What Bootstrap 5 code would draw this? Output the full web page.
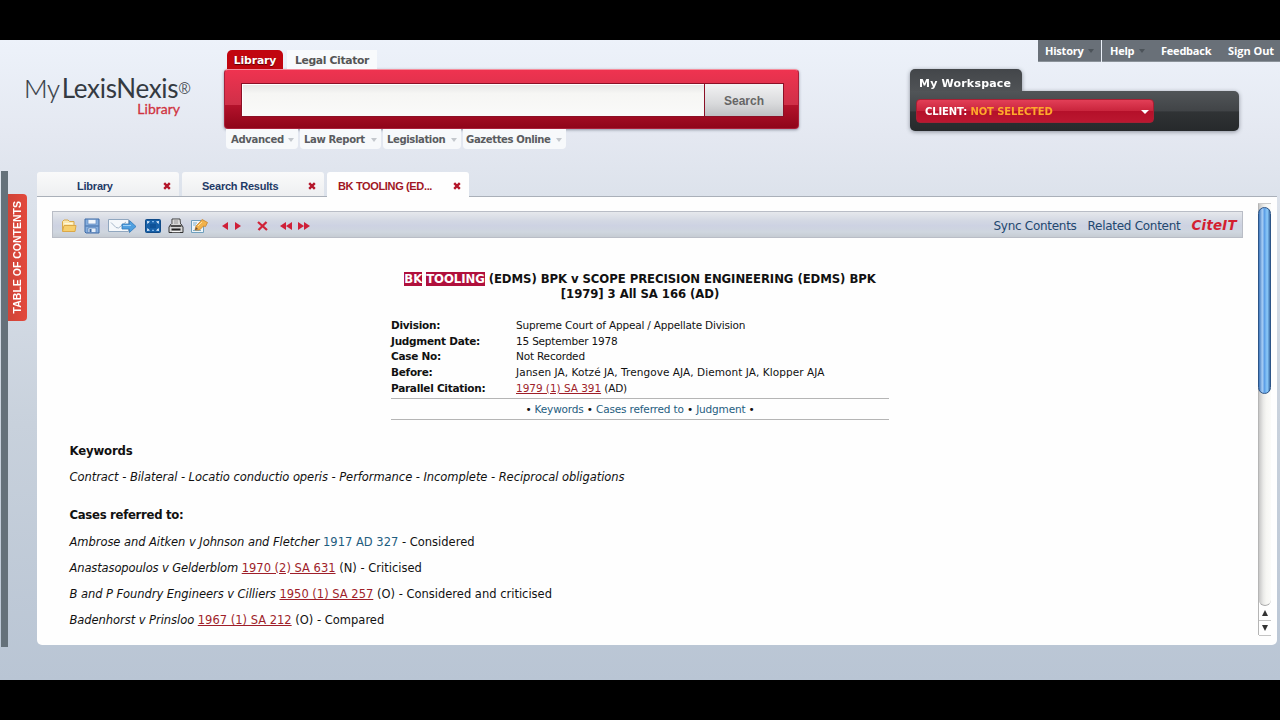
<!DOCTYPE html>
<html lang="en">
<head>
<meta charset="utf-8">
<meta name="viewport" content="width=device-width, initial-scale=1">
<title>MyLexisNexis Library</title>
<link rel="stylesheet" href="https://cdn.jsdelivr.net/npm/bootstrap@5.3.0/dist/css/bootstrap.min.css">
<style>
body{font-family:"DejaVu Sans","Liberation Sans",sans-serif;font-size:11px;line-height:16px;color:#111;background:#000;width:1280px;height:720px;overflow:hidden;padding:40px 0}
a{text-decoration:none;color:inherit}
.app{height:640px;background:linear-gradient(#edf2fa,#e4e8f1 15%,#dce2eb 25%,#c8d1dc 60%,#b9c5d4)}
.app-head{height:131px}
/* brand */
.brand{width:224px;padding:34px 0 0 24px;font-family:Lato,sans-serif;color:#343a42}
.brand-name{font-size:26px;line-height:28px;letter-spacing:-.3px;white-space:nowrap}
.brand-name .thin{font-weight:300;margin-right:2px;-webkit-text-stroke:.2px}
.brand-name .reg{font-size:15px;line-height:1;font-weight:300;vertical-align:4px;-webkit-text-stroke:.2px}
.brand-sub{width:156px;text-align:right;color:#d0333f;font-size:14px;line-height:14px;-webkit-text-stroke:.3px}
/* search */
.finder{width:575px;padding-top:10px}
.finder-tabs{height:19px;padding-left:3px;font-weight:700;font-size:10.8px;letter-spacing:-.12px;gap:4px}
.finder-tabs a{height:19px;line-height:22px;white-space:nowrap;text-align:center}
.finder-tabs .on{background:#c1050f;color:#fff;width:56px;border-radius:5px 5px 0 0;text-shadow:0 1px 1px #500}
.finder-tabs .off{background:#f8fafc;color:#555;width:90px;letter-spacing:-.35px}
.finder-box{height:60px;padding:13px 14px 13px 16px;border-radius:4px;border:1px solid #a9203a;border-top-color:#f48d9c;background:linear-gradient(#ef3350,#cf3048 60%,#b3122b 61%,#8f0519);box-shadow:0 1px 3px #8b90a0}
.finder-box .query{height:34px;min-width:0;border:1px solid #8b1026;border-right:0;border-radius:0;background:linear-gradient(#e6e6e5,#f6f6f4 30%,#fafaf9);box-shadow:inset 1px 1px 0 #fff;padding:0}
.finder-box .go{flex:0 0 80px;height:34px;border:1px solid #8b1026;border-radius:0;background:linear-gradient(#f2f2f3,#d9dadc 60%,#bfc0c3);font:700 12px "Liberation Sans",sans-serif;color:#666;padding:2px 0 0}
.finder-menu{padding-left:2px;gap:2px;letter-spacing:-.4px}
.finder-menu a{flex:0 0 auto;height:20px;line-height:18px;background:#f7f9fb;border-radius:0 0 4px 4px;font-weight:700;font-size:10.1px;color:#5a5c60;padding:2px 4px 0;white-space:nowrap;display:flex;justify-content:space-between;align-items:center}
.w-a{width:72px;letter-spacing:-.35px}.w-b{width:81px}.w-c{width:78px}.w-d{width:103px}
.finder-menu .w-a{padding-left:5px}.finder-menu .w-d{padding-left:3px}
.caret{display:inline-block;border:3px solid transparent;border-top:4px solid #c3c7cc;border-bottom:0}
/* account links and workspace */
.side{width:370px}
.util{height:22px;font:700 11px/20px "Open Sans",sans-serif;letter-spacing:-.22px;color:#fff}
.util a{background:#697078;padding:1px 7px 0;height:22px;white-space:nowrap;display:flex;justify-content:space-between;align-items:center;border-bottom:1px solid #8b9299}
.util .h{width:63px;margin-right:1px}.util .q{width:50px;padding-left:8px}.util .f{width:67px;padding-left:9px}.util .s{width:61px;padding-left:9px;padding-right:0;justify-content:flex-start;letter-spacing:-.05px}
.util .caret{border-top-color:#4c5359}
.desk{width:329px;margin-top:7px;filter:drop-shadow(0 1px 2px #8a8f9a)}
.desk-tab{width:112px;height:23px;background:linear-gradient(#43464a,#505356);border-radius:5px 5px 0 0;color:#fff;font-weight:700;line-height:29px;padding-left:9px;letter-spacing:.2px;white-space:nowrap}
.desk-body{height:40px;margin-top:-1px;border-radius:0 5px 5px 5px;background:linear-gradient(#515558,#414447 50%,#303335 52%,#26292b);padding:8px 6px}
.client{width:238px;height:24px;border-radius:4px;background:linear-gradient(#e23f57,#c9243c 50%,#b5102a 52%,#bb1730);border:1px solid #a81f33;color:#fff;font-weight:700;padding:1px 4px 0 8px;font-size:10px;letter-spacing:-.12px}
.client em{font-style:normal;color:#ffa92b}
.client .caret{border-width:4px;border-top:4px solid #fff;border-bottom:0}
/* work area */
.work{height:476px}
.rail{width:7px;margin-left:1px;background:#65717a}
.toc{width:19px;height:127px;margin-top:23px;border-radius:0 4px 4px 0;background:linear-gradient(90deg,#cf4438,#e3493c);color:#fff;font:700 10.5px/19px "Liberation Sans",sans-serif}
.toc span{writing-mode:vertical-rl;transform:rotate(180deg);white-space:nowrap}
.desk-main{width:1240px;margin-left:10px}
.doc-tabs{height:26px;padding-top:1px;gap:3px;font:700 11px/26px "Liberation Sans",sans-serif;letter-spacing:-.22px;color:#1e3a66;border-bottom:1px solid #aab0b9}
.doc-tabs>div{width:142px;height:24px;background:linear-gradient(#fafafa,#eeeff1);border-radius:3px 3px 0 0;display:flex;align-items:center;padding:3px 8px 0 40px;white-space:nowrap}
.doc-tabs>.mid{padding-left:20px}
.doc-tabs>.on{height:25px;background:#fefefe;color:#a01724;padding:3px 8px 1px 11px;letter-spacing:-.35px}
.doc-tabs svg{margin-left:auto}
.panel{height:448px;background:#fefefe;border-radius:0 0 5px 5px}
.page-col{width:1221px;padding:14px 0 0 15px}
.tools{width:1191px;height:27px;border:1px solid #b9bdc6;background:linear-gradient(#e6e8ec,#d3d8e3 35%,#cdd2e2 55%,#cfd6df 80%,#c6ccd3);padding:2px 5px 0 8px}
.tools svg{display:block;flex:none}
.tools a{font-size:12px;line-height:18px;padding-top:1px;color:#23476f;white-space:nowrap;letter-spacing:-.28px;margin-left:11px}
.tools .cite{color:#d31f30;font-weight:700;font-style:italic;font-size:13.4px;letter-spacing:.25px}
.g6{margin-left:6px}.g7{margin-left:7px}.g8{margin-left:8px}.g12{margin-left:12px}.g14{margin-left:14px}.g16{margin-left:16px}
/* document */
.case-head{width:498px;margin:34px 0 0 339px}
.case-title{font:700 11.7px/15px "DejaVu Sans",sans-serif;letter-spacing:-.07px;text-align:center;margin:0 0 16px;white-space:nowrap}
.hit{background:#b0103c;color:#fff}
.facts{display:grid;grid-template-columns:125px 1fr;font-size:10.5px;line-height:15.7px;letter-spacing:-.19px;margin:0;white-space:nowrap}
.facts dt{font-weight:700;letter-spacing:-.27px}.facts dd{margin:0}
.facts .loose{letter-spacing:.06px}
.facts .red{letter-spacing:-.04px}
.red{color:#9e1f2a;text-decoration:underline}
.blue{color:#1f5d7f}
.jump{border-top:1px solid #b5b5b5;border-bottom:1px solid #b5b5b5;height:22px;line-height:21px;margin-top:1px;text-align:center;font-size:10.5px;letter-spacing:-.16px}
.body-text{padding:23px 0 0 17.5px;font-size:11.5px;letter-spacing:0;white-space:nowrap}
.body-text em{letter-spacing:-.05px}
.body-text .snug em{letter-spacing:-.12px}
.body-text h2{font:700 11.7px/16px "DejaVu Sans",sans-serif;letter-spacing:-.15px;margin:0 0 10.5px}
.body-text .narrow{letter-spacing:-.3px}
.body-text p{margin:0 0 10.3px;line-height:16px}
.body-text .kw{margin-bottom:22px}
/* scrollbar */
.scroll{width:13px;margin:6px 0 10px;border-left:1px solid #b5b5b5;border-top:1px solid #ccc}
.track{height:402px;border-radius:0 0 7px 7px;background:linear-gradient(90deg,#c6c6c6,#e9e9e7 35%,#f6f6f3 60%,#fbfbf9);border-bottom:1px solid #aaa;padding-top:3px}
.thumb{width:13px;height:187px;margin-left:-1px;border:1px solid #2c5487;border-radius:7px;background:linear-gradient(90deg,#3f78bd,#a8cdf4 30%,#5d9fe6 50%,#8dcbfa 75%,#3a6da8)}
.step{height:15px;border-bottom:1px solid #c4c4c4}
</style>
</head>
<body>
<svg class="d-none"><defs>
<symbol id="close" viewBox="0 0 8 8"><path d="M1.2 1.2 6.8 6.8M6.8 1.2 1.2 6.8" stroke="#b4162a" stroke-width="2.4"/></symbol>
</defs></svg>
<div class="app">
<header class="app-head d-flex align-items-start">
  <div class="brand"><div class="brand-name"><span class="thin">My</span>LexisNexis<span class="reg">®</span></div><div class="brand-sub">Library</div></div>
  <div class="finder">
    <nav class="finder-tabs d-flex"><a class="on" href="#">Library</a><a class="off" href="#">Legal Citator</a></nav>
    <form class="finder-box d-flex"><input class="form-control query flex-grow-1" aria-label="Search"><button type="button" class="btn go">Search</button></form>
    <nav class="finder-menu d-flex"><a class="w-a" href="#">Advanced<i class="caret"></i></a><a class="w-b" href="#">Law Report<i class="caret"></i></a><a class="w-c" href="#">Legislation<i class="caret"></i></a><a class="w-d" href="#">Gazettes Online<i class="caret"></i></a></nav>
  </div>
  <div class="side d-flex flex-column ms-auto">
    <nav class="util d-flex align-self-end"><a class="h" href="#">History<i class="caret"></i></a><a class="q" href="#">Help<i class="caret"></i></a><a class="f" href="#">Feedback</a><a class="s" href="#">Sign Out</a></nav>
    <section class="desk"><div class="desk-tab">My Workspace</div><div class="desk-body"><div class="client d-flex align-items-center justify-content-between"><span>CLIENT: <em>NOT SELECTED</em></span><i class="caret"></i></div></div></section>
  </div>
</header>
<main class="work d-flex">
  <div class="rail"></div>
  <div class="toc d-flex justify-content-center align-items-center"><span>TABLE OF CONTENTS</span></div>
  <div class="desk-main">
    <div class="doc-tabs d-flex">
      <div>Library<svg width="8" height="8"><use href="#close"/></svg></div>
      <div class="mid">Search Results<svg width="8" height="8"><use href="#close"/></svg></div>
      <div class="on">BK TOOLING (ED...<svg width="8" height="8"><use href="#close"/></svg></div>
    </div>
    <div class="panel d-flex">
      <div class="page-col">
        <div class="tools d-flex align-items-center">
          <svg width="16" height="14" viewBox="0 0 16 14"><path d="M1.5 12V2.500L3 1h4l1.500 1.500H13V6" fill="#fbe9b0" stroke="#d9a94a"/><path d="M1.500 12.500 3 6.500h12l-1 6z" fill="#f7cf6c" stroke="#dba848"/><path d="M3.500 4.500h8" stroke="#fff8dc"/></svg>
          <svg class="g7" width="16" height="16" viewBox="0 0 16 16"><path d="M1 1h14v14H2l-1-1z" fill="#86aede" stroke="#3f6ba5"/><path d="M4 1.500h8V6H4z" fill="#f1f6fc" stroke="#5f88bd" stroke-width=".7"/><path d="M1.500 8h13" stroke="#3f6ba5"/><path d="M4 10h8v4.500H4z" fill="#e4eefa" stroke="#4a76b0" stroke-width=".7"/><path d="M5.500 11h2v3h-2z" fill="#3f6ba5"/></svg>
          <svg class="g8" width="29" height="16" viewBox="0 0 29 16"><path d="M.5 1.500h20v12H.5z" fill="#f5f8fb" stroke="#91a7bf"/><path d="m3 4.500 5 5 2.500.5L18 4" fill="none" stroke="#a5b6c8"/><path d="M14 6h7.500V2.500L28 8.500l-6.500 6V11H14z" fill="#4f9fe0" stroke="#3179b9" stroke-width=".8"/><path d="M15 7.500h8" stroke="#9ed0f5"/></svg>
          <svg class="g8" width="16" height="14" viewBox="0 0 16 14"><rect x=".5" y=".5" width="15" height="13" rx="1" fill="#1760a8" stroke="#104a87"/><path d="m2 2 3 .4L2.400 5zM14 2l-3 .4L13.600 5zM2 12l3-.4L2.400 9zM14 12l-3-.4L13.600 9z" fill="#e6f2ff"/><path d="M7 2.700h2M7 11.300h2" stroke="#7db5ea" stroke-width="1.300"/><path d="M5 5h6v4H5z" fill="#0e5298"/></svg>
          <svg class="g7" width="16" height="16" viewBox="0 0 16 16"><path d="M4 7V1h8l.5 6" fill="#fafafa" stroke="#3c3c3c"/><path d="M5.500 3h5M5.500 5h5" stroke="#777"/><path d="M3 6 1 9v5.500h14V9l-2-3" fill="#d8d8d8" stroke="#333"/><path d="M2.500 8h11" stroke="#222" stroke-width="1.500"/><path d="M3.500 11.500h9" stroke="#222" stroke-width="2"/><path d="M4 13.700h8" stroke="#fff"/></svg>
          <svg class="g7" width="17" height="16" viewBox="0 0 17 16"><path d="M.5 2.500h12v12H.5z" fill="#edf5fa" stroke="#6f9fbd"/><path d="M2 12.500h8M2 5h4M2 7h3" stroke="#83aec7"/><path d="m4 12 1-4 4-4 2-2.500 2 1 3.500 2-2 4-2-.5-4 4z" fill="#f1b24c" stroke="#c7832c" stroke-width=".8"/><path d="m4 12 1-3 2 2z" fill="#725337"/><path d="m7 8 4-4" stroke="#ffe1a0"/></svg>
          <svg class="g14" width="6" height="8" viewBox="0 0 6 8"><path d="M6 0v8L0 4z" fill="#cf1f38"/></svg>
          <svg class="g7" width="6" height="8" viewBox="0 0 6 8"><path d="M0 0v8l6-4z" fill="#cf1f38"/></svg>
          <svg class="g16" width="11" height="10" viewBox="0 0 11 10"><path d="m1 1 9 8M9.500 1 1.500 9" stroke="#d02338" stroke-width="2.300"/></svg>
          <svg class="g12" width="12" height="8" viewBox="0 0 12 8"><path d="M6 0v8L0 4zM12 0v8L6 4z" fill="#cf1f38"/></svg>
          <svg class="g6" width="12" height="8" viewBox="0 0 12 8"><path d="M0 0v8l6-4zM6 0v8l6-4z" fill="#cf1f38"/></svg>
          <a class="ms-auto" href="#">Sync Contents</a><a href="#">Related Content</a><a class="cite" href="#">CiteIT</a>
        </div>
        <div class="case-head">
          <h1 class="case-title"><span class="hit">BK</span> <span class="hit">TOOLING</span> (EDMS) BPK v SCOPE PRECISION ENGINEERING (EDMS) BPK<br>[1979] 3 All SA 166 (AD)</h1>
          <dl class="facts">
            <dt>Division:</dt><dd>Supreme Court of Appeal / Appellate Division</dd>
            <dt>Judgment Date:</dt><dd>15 September 1978</dd>
            <dt>Case No:</dt><dd>Not Recorded</dd>
            <dt>Before:</dt><dd class="loose">Jansen JA, Kotzé JA, Trengove AJA, Diemont JA, Klopper AJA</dd>
            <dt>Parallel Citation:</dt><dd><a class="red" href="#">1979 (1) SA 391</a> (AD)</dd>
          </dl>
          <div class="jump">• <a class="blue" href="#">Keywords</a> • <a class="blue" href="#">Cases referred to</a> • <a class="blue" href="#">Judgment</a> •</div>
        </div>
        <div class="body-text">
          <h2>Keywords</h2>
          <p class="kw"><em>Contract - Bilateral - Locatio conductio operis - Performance - Incomplete - Reciprocal obligations</em></p>
          <h2 class="narrow">Cases referred to:</h2>
          <p><em>Ambrose and Aitken v Johnson and Fletcher</em> <a class="blue" href="#">1917 AD 327</a> - Considered</p>
          <p class="snug"><em>Anastasopoulos v Gelderblom</em> <a class="red" href="#">1970 (2) SA 631</a> (N) - Criticised</p>
          <p><em>B and P Foundry Engineers v Cilliers</em> <a class="red" href="#">1950 (1) SA 257</a> (O) - Considered and criticised</p>
          <p><em>Badenhorst v Prinsloo</em> <a class="red" href="#">1967 (1) SA 212</a> (O) - Compared</p>
        </div>
      </div>
      <div class="scroll">
        <div class="track"><div class="thumb"></div></div>
        <div class="step d-flex align-items-center justify-content-center"><svg width="6" height="6" viewBox="0 0 6 6"><path d="M3 0 6 6H0z" fill="#333"/></svg></div>
        <div class="step d-flex align-items-center justify-content-center"><svg width="6" height="6" viewBox="0 0 6 6"><path d="M3 6 6 0H0z" fill="#333"/></svg></div>
      </div>
    </div>
  </div>
</main>
</div>
<script src="https://cdn.jsdelivr.net/npm/bootstrap@5.3.0/dist/js/bootstrap.bundle.min.js"></script>
</body>
</html>
